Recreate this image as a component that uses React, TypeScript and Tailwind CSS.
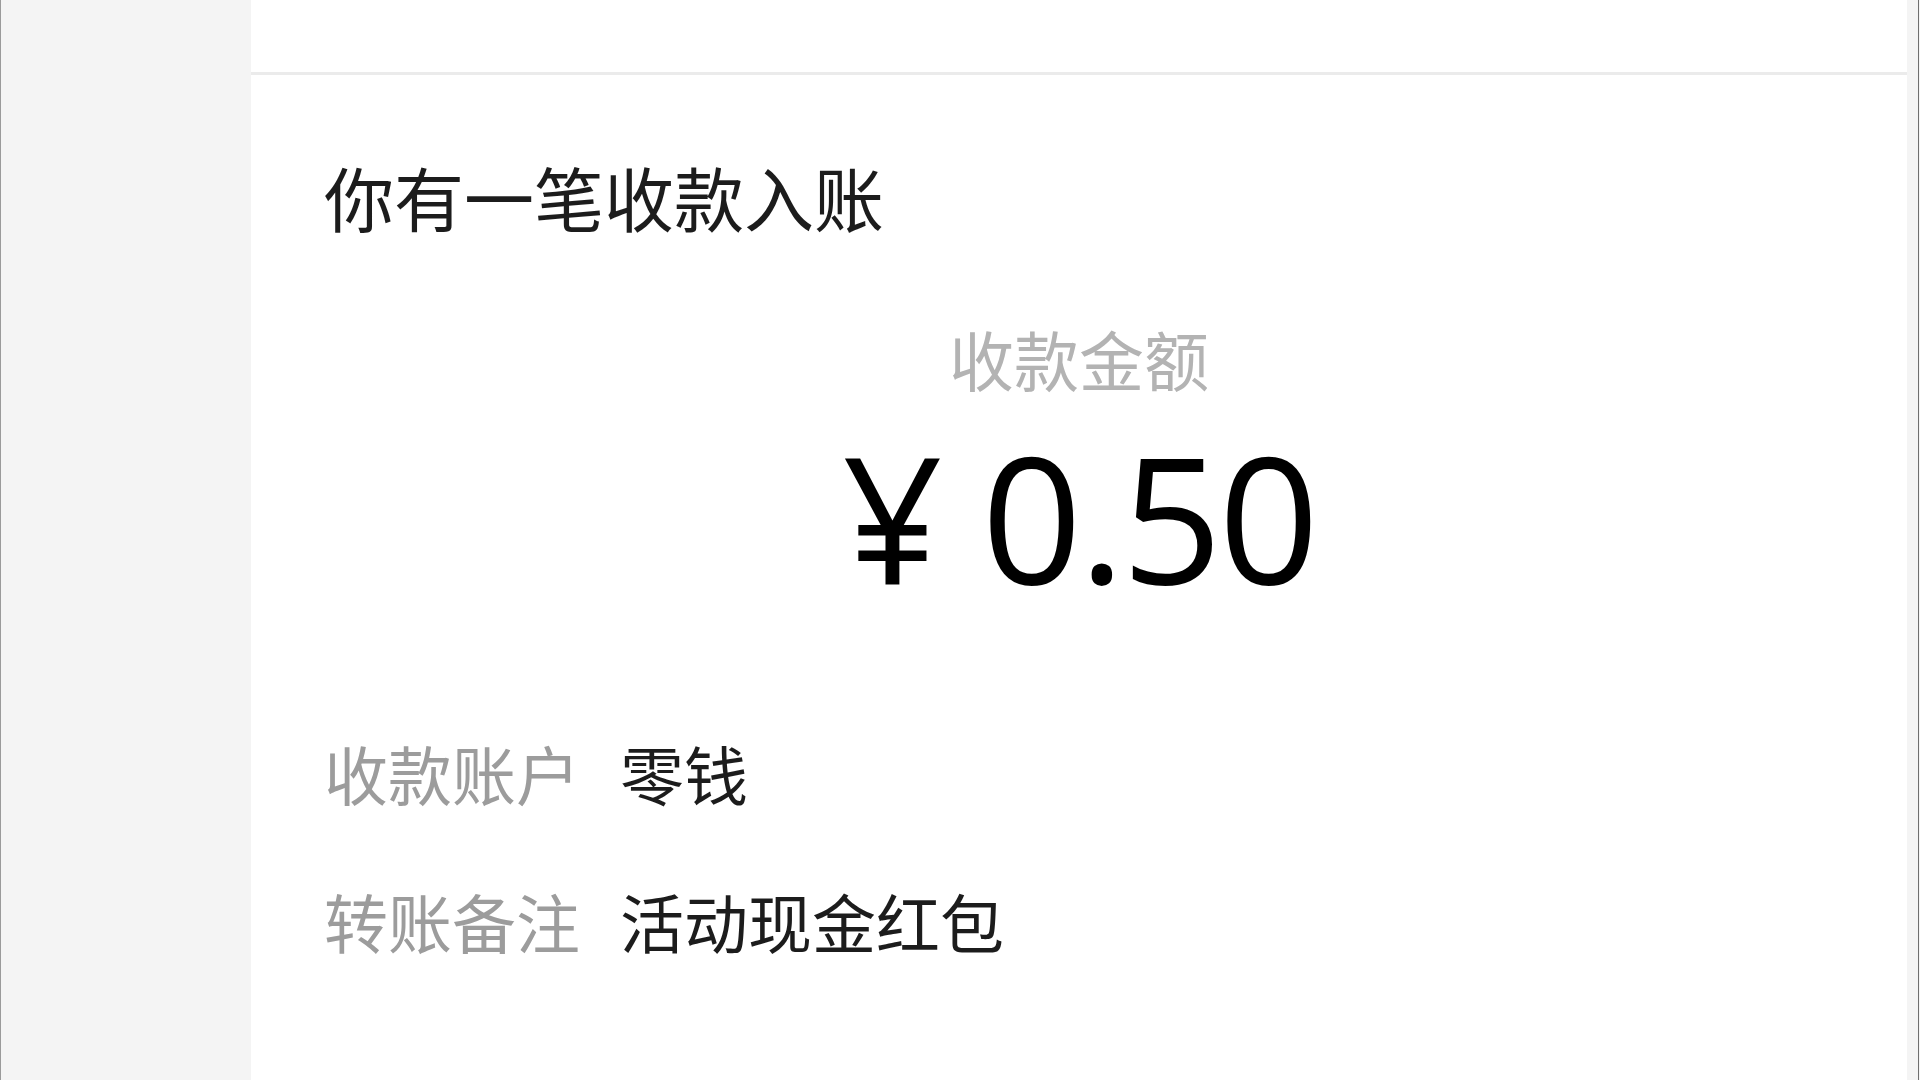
const FONT = "font-['Noto_Sans_CJK_SC','Noto_Sans',sans-serif]";

const rows = [
  { label: "收款账户", value: "零钱" },
  { label: "转账备注", value: "活动现金红包" },
];

export default function App() {
  return (
    <div className={`flex h-[1080px] w-[1920px] overflow-hidden bg-[#f4f4f4] ${FONT}`}>
      <div className="w-[251px] shrink-0 border-l border-[#9a9a9a]" />

      <div className="flex w-[1656px] shrink-0 flex-col bg-white">
        <div className="h-[72px]" />
        <div className="h-[3px] bg-[#ebebeb]" />

        <div className="flex flex-col pl-[73px] pt-[82px]">
          <h1 className="text-[70px] leading-[80px] text-[#1c1c1c]">你有一笔收款入账</h1>

          <div className="mt-[85px] flex flex-col items-center pr-[73px]">
            <p className="text-[65px] leading-[72px] text-[#b3b3b3]">收款金额</p>
            <p className="mt-[27px] font-['Open_Sans',sans-serif] text-[176px] leading-[190px] tracking-[-0.02em] text-black">
              ¥ 0.50
            </p>
          </div>

          <div className="mt-[125px] flex flex-col gap-[76px]">
            {rows.map((r) => (
              <div key={r.label} className="flex items-center gap-[40px] text-[64px] leading-[72px]">
                <span className="text-[#9c9c9c]">{r.label}</span>
                <span className="text-[#1c1c1c]">{r.value}</span>
              </div>
            ))}
          </div>
        </div>
      </div>

      <div className="w-[12px] shrink-0 border-r border-[#6e6e6e]" />
    </div>
  );
}
